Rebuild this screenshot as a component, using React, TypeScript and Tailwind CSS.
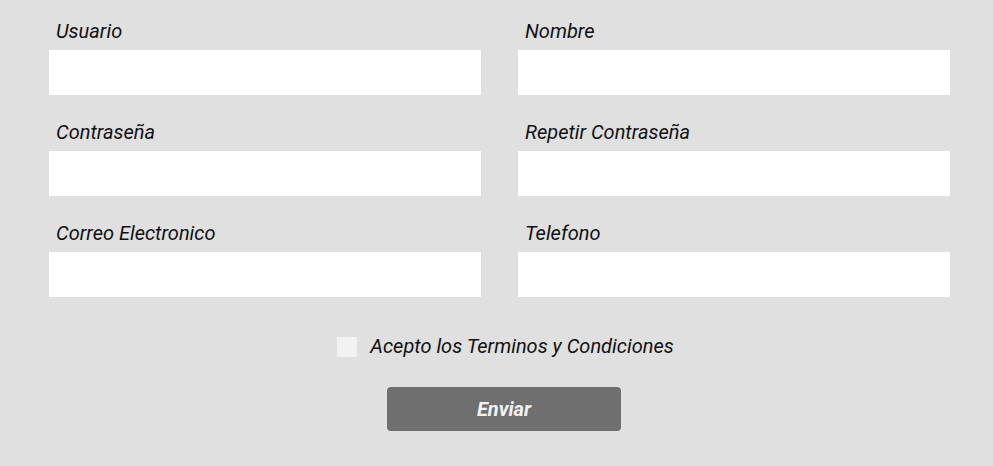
const fields = [
  "Usuario",
  "Nombre",
  "Contraseña",
  "Repetir Contraseña",
  "Correo Electronico",
  "Telefono",
];

export default function App() {
  return (
    <div
      className="w-[993px] h-[466px] bg-[#e0e0e0] pt-[19px] pl-[49px] italic text-[#111]"
      style={{ fontFamily: "Roboto, sans-serif" }}
    >
      <div className="grid grid-cols-[432px_432px] gap-x-[37px] gap-y-[25px]">
        {fields.map((f) => (
          <div key={f} className="flex flex-col">
            <label className="pl-[7px] text-[20px] leading-[24px] h-[24px] mb-[7px]">
              {f}
            </label>
            <input className="h-[45px] w-full bg-white outline-none" />
          </div>
        ))}
      </div>
      <div className="w-[901px] flex flex-col items-center">
        <div className="mt-[37px] flex items-start h-[24px] ml-[12px]">
          <span className="w-[20px] h-[20px] bg-[#f2f2f2] mr-[13px] mt-[3px]" />
          <span className="text-[20px] leading-[24px]">
            Acepto los Terminos y Condiciones
          </span>
        </div>
        <button className="mt-[29px] w-[234px] h-[44px] rounded-[4px] bg-[#6f6f6f] text-[#f2f2f2] text-[20px] font-bold italic ml-[9px]">
          Enviar
        </button>
      </div>
    </div>
  );
}
